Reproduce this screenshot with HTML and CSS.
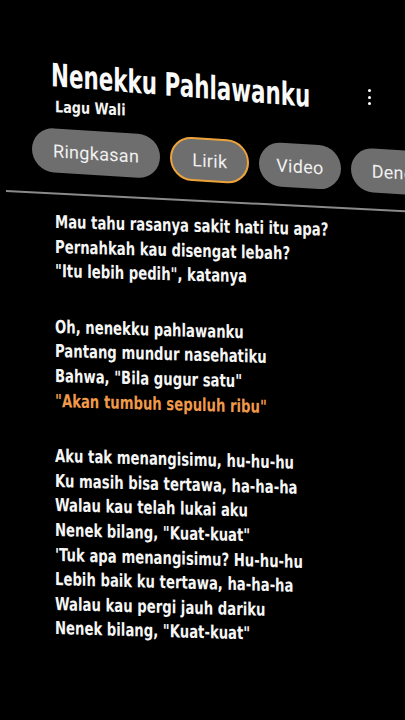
FILE: index.html
```html
<!DOCTYPE html>
<html lang="id">
<head>
<meta charset="utf-8">
<link rel="stylesheet" href="styles.css">
</head>
<body>
<div class="screen">
  <header class="head">
    <div class="titles">
      <h1 class="title">Nenekku Pahlawanku</h1>
      <div class="subtitle">Lagu Wali</div>
    </div>
    <div class="kebab"><span></span><span></span><span></span></div>
  </header>
  <nav class="chips">
    <div class="chip">Ringkasan</div>
    <div class="chip active">Lirik</div>
    <div class="chip video">Video</div>
    <div class="chip">Dengarkan</div>
  </nav>
  <div class="rule"></div>
  <main class="lyrics">
    <p class="stanza">Mau tahu rasanya sakit hati itu apa?<br>Pernahkah kau disengat lebah?<br>"Itu lebih pedih", katanya</p>
    <p class="stanza">Oh, nenekku pahlawanku<br>Pantang mundur nasehatiku<br>Bahwa, "Bila gugur satu"<br><span class="hl">"Akan tumbuh sepuluh ribu"</span></p>
    <p class="stanza">Aku tak menangisimu, hu-hu-hu<br>Ku masih bisa tertawa, ha-ha-ha<br>Walau kau telah lukai aku<br>Nenek bilang, "Kuat-kuat"<br>'Tuk apa menangisimu? Hu-hu-hu<br>Lebih baik ku tertawa, ha-ha-ha<br>Walau kau pergi jauh dariku<br>Nenek bilang, "Kuat-kuat"</p>
  </main>
</div>
</body>
</html>
```
FILE: styles.css
```css
html, body {
  margin: 0;
  padding: 0;
  background: #000;
}
.screen {
  width: 405px;
  height: 720px;
  overflow: hidden;
  background: #000;
  color: #f4f4f4;
}
.head {
  display: flex;
  align-items: flex-start;
  padding: 57px 0 0 51px;
}
.titles {
  flex: 1;
  min-width: 0;
  transform: skewY(4.6deg);
  transform-origin: 0 0;
  white-space: nowrap;
}
.title {
  margin: 0;
  font-family: "DejaVu Sans", sans-serif;
  font-weight: bold;
  font-size: 32px;
  line-height: 36px;
  color: #fafafa;
  transform: scaleX(0.67);
  transform-origin: 0 0;
}
.subtitle {
  font-family: "DejaVu Sans", sans-serif;
  font-weight: bold;
  font-size: 16px;
  line-height: 16px;
  margin: 6px 0 0 4px;
  transform: skewY(-2deg) scaleX(0.8);
  transform-origin: 0 0;
}
.kebab {
  flex: none;
  margin-right: 34px;
  margin-top: 32px;
  display: flex;
  flex-direction: column;
  gap: 3.5px;
}
.kebab span {
  width: 3px;
  height: 3px;
  border-radius: 50%;
  background: #fff;
}
.chips {
  display: flex;
  gap: 10px;
  padding: 10px 0 0 32px;
  transform: skewY(3.6deg);
  transform-origin: 0 0;
  white-space: nowrap;
}
.chip {
  flex: none;
  height: 44px;
  box-sizing: border-box;
  padding: 0 21px;
  border-radius: 22px;
  background: #6e6e6e;
  font-family: Roboto, sans-serif;
  font-size: 18px;
  color: #f0f0f0;
  display: flex;
  align-items: center;
  letter-spacing: 0.3px;
}
.chip.active {
  border: 2.5px solid #eda33a;
  padding: 0 20px;
}
.chip.video {
  padding: 0 17px;
}
.rule {
  margin: 21px 0 0 6px;
  width: 420px;
  height: 1.5px;
  background: #8a8a8a;
  transform: skewY(2.9deg);
  transform-origin: 0 0;
}
.lyrics {
  padding: 18px 0 0 55px;
  transform: skewY(1.6deg);
  transform-origin: 55px 0;
  font-family: "DejaVu Sans", sans-serif;
  font-weight: bold;
  font-size: 18px;
  line-height: 24.6px;
  color: #f6f6f6;
  white-space: nowrap;
}
.stanza {
  margin: 0 0 31px;
  transform: scaleX(0.735);
  transform-origin: 0 0;
}
.hl {
  color: #f09a4a;
}
```
